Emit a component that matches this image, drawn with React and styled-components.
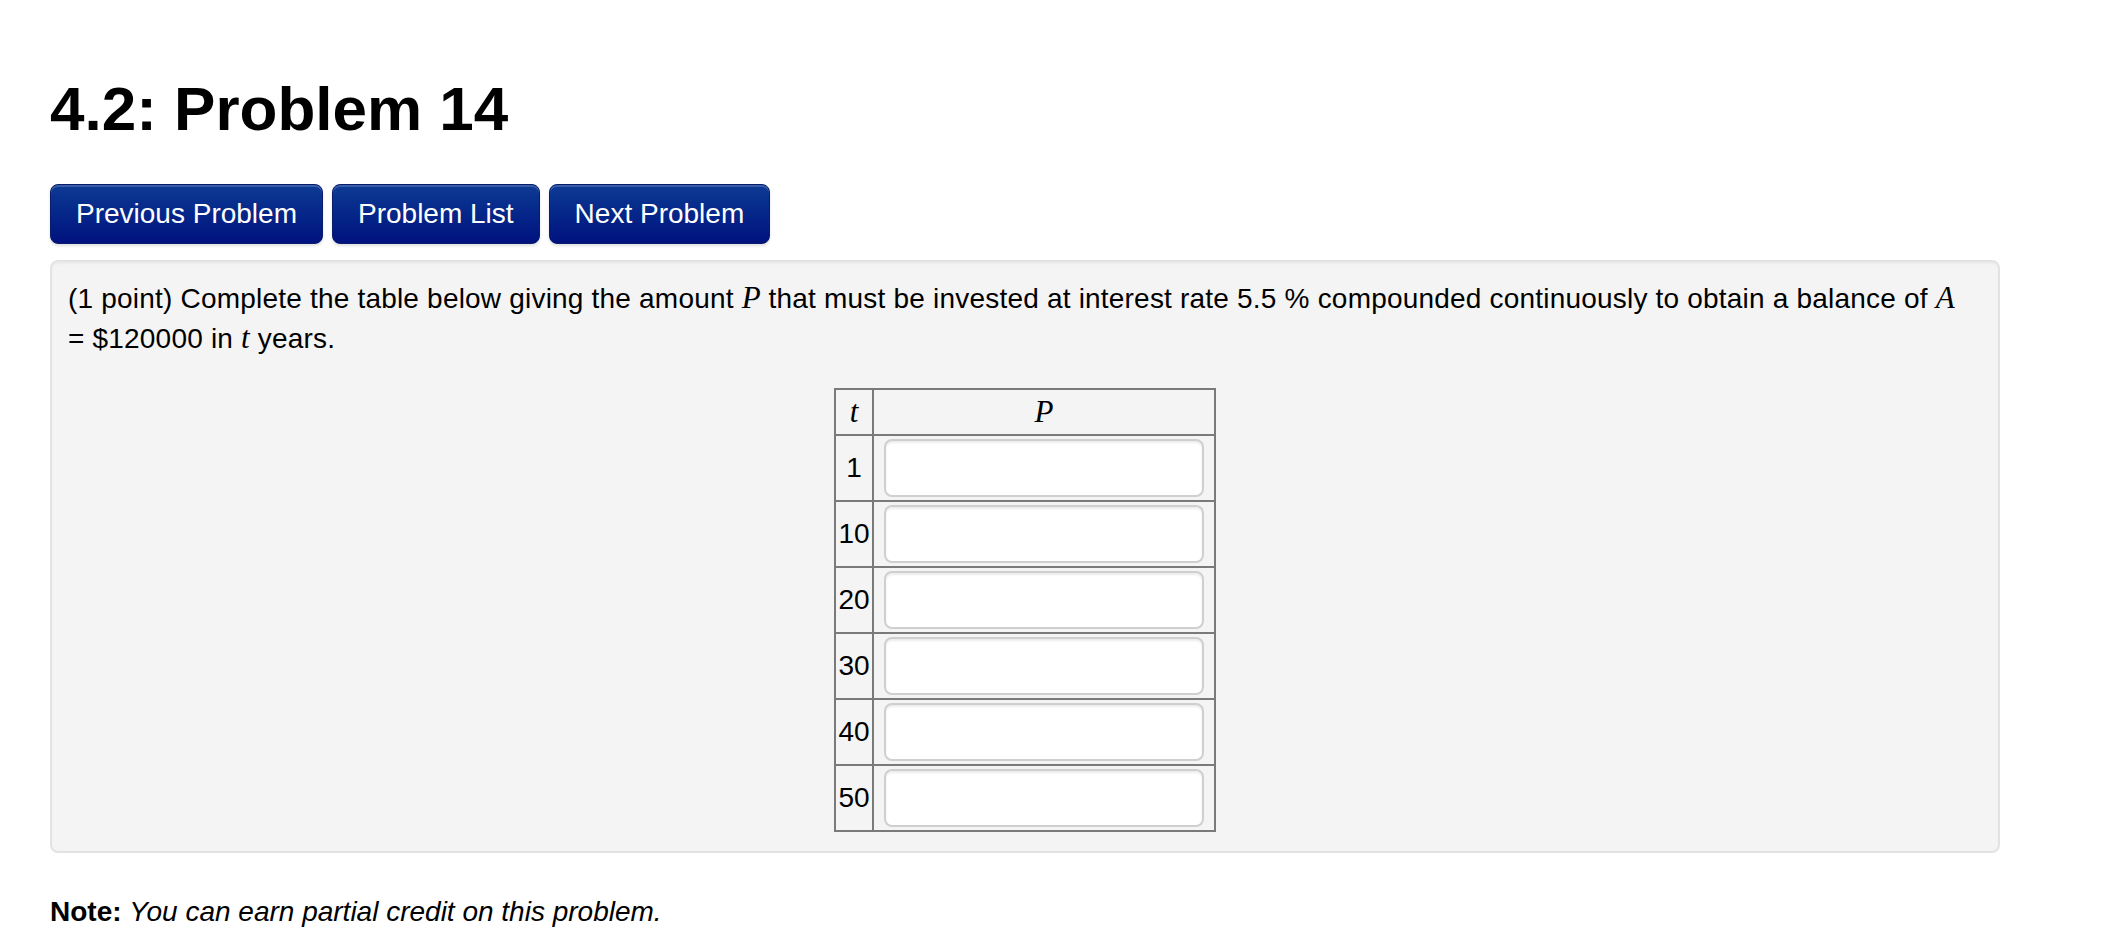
import { createGlobalStyle, styled } from "styled-components";

const GlobalStyle = createGlobalStyle`
  html, body {
    margin: 0;
    padding: 0;
    background: #fff;
  }
  body {
    font-family: "Liberation Sans", Arial, Helvetica, sans-serif;
    color: #000;
  }
`;

const Page = styled.div`
  width: 1950px;
  padding: 72px 0 0 50px;
`;

const Title = styled.h1`
  margin: 0;
  font-size: 62px;
  line-height: 74px;
  font-weight: bold;
`;

const NavBar = styled.div`
  display: flex;
  gap: 9px;
  margin-top: 38px;
`;

const NavButton = styled.button`
  height: 60px;
  padding: 0 25px;
  font-family: "Liberation Sans", Arial, Helvetica, sans-serif;
  font-size: 28px;
  line-height: 1;
  color: #fff;
  border: 1px solid #0a1c6c;
  border-radius: 8px;
  background: linear-gradient(to bottom, #0d3b94 0%, #062a8b 40%, #00127f 100%);
  box-shadow: inset 0 2px 0 rgba(255, 255, 255, 0.18), 0 2px 3px rgba(0, 0, 0, 0.12);
  cursor: pointer;
`;

const Well = styled.div`
  margin-top: 16px;
  padding: 17px 16px 19px;
  background: #f4f4f4;
  border: 2px solid #e3e3e3;
  border-radius: 8px;
  box-shadow: inset 0 2px 2px rgba(0, 0, 0, 0.04);
`;

const Statement = styled.p`
  margin: 0 0 29px;
  font-size: 28px;
  line-height: 40px;
  letter-spacing: 0.2px;
`;

// inline math, set like the typeset variables
const M = styled.span`
  font-family: "Liberation Serif", "Times New Roman", serif;
  font-style: italic;
  font-size: ${(p) => p.size || 31}px;
  line-height: 1;
  letter-spacing: 0;
`;

const AnswerTable = styled.table`
  margin: 0 auto;
  border-collapse: collapse;
  border: 2px solid #2b2b2b;
  font-size: 28px;
`;

const HeadCell = styled.th`
  height: 44px;
  padding: 0 2px;
  border: 2px solid #7a7a7a;
  font-weight: normal;
  text-align: center;
  vertical-align: middle;
`;

const Cell = styled.td`
  padding: ${(p) => (p.input ? "3px 10px" : "0 2px")};
  border: 2px solid #7a7a7a;
  text-align: center;
  vertical-align: middle;
  width: ${(p) => (p.input ? "320px" : "32px")};
  line-height: 1;
`;

const Answer = styled.input`
  display: block;
  box-sizing: border-box;
  width: 320px;
  height: 58px;
  margin: 0;
  padding: 0 10px;
  font-size: 28px;
  font-family: "Liberation Sans", Arial, sans-serif;
  background: #fff;
  border: 2px solid #cfcfcf;
  border-radius: 8px;
  box-shadow: inset 0 2px 2px rgba(0, 0, 0, 0.075);
  outline: none;
`;

const Note = styled.p`
  margin: 39px 0 0;
  font-size: 28px;
  line-height: 40px;
  em {
    font-style: italic;
  }
`;

const years = [1, 10, 20, 30, 40, 50];

const App = () => {
  return (
    <>
      <GlobalStyle />
      <Page>
        <Title>4.2: Problem 14</Title>
        <NavBar>
          <NavButton>Previous Problem</NavButton>
          <NavButton>Problem List</NavButton>
          <NavButton>Next Problem</NavButton>
        </NavBar>
        <Well>
          <Statement>
            (1 point) Complete the table below giving the amount <M>P</M> that must be
            invested at interest rate 5.5 % compounded continuously to obtain a balance
            of <M>A</M>
            <br />= $120000 in <M>t</M> years.
          </Statement>
          <AnswerTable>
            <thead>
              <tr>
                <HeadCell>
                  <M>t</M>
                </HeadCell>
                <HeadCell>
                  <M>P</M>
                </HeadCell>
              </tr>
            </thead>
            <tbody>
              {years.map((y) => (
                <tr key={y}>
                  <Cell>{y}</Cell>
                  <Cell input>
                    <Answer type="text" />
                  </Cell>
                </tr>
              ))}
            </tbody>
          </AnswerTable>
        </Well>
        <Note>
          <b>Note:</b> <em>You can earn partial credit on this problem.</em>
        </Note>
      </Page>
    </>
  );
};

export default App;
